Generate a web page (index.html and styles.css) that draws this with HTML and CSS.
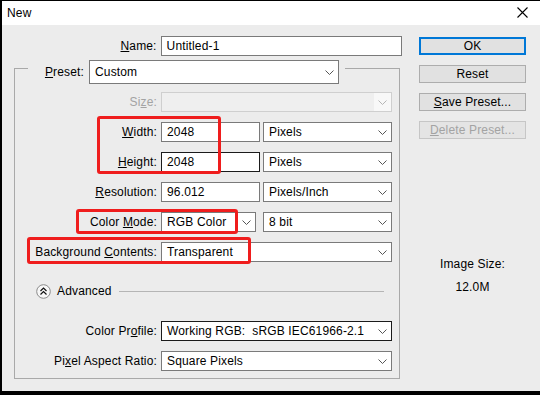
FILE: index.html
```html
<!DOCTYPE html>
<html>
<head>
<meta charset="utf-8">
<link rel="stylesheet" href="styles.css">
</head>
<body>
<div class="window">
  <div class="titlebar">
    <span class="title">New</span>
    <svg class="close" width="11" height="11" viewBox="0 0 11 11"><path d="M0.5 0.5L10.5 10.5M10.5 0.5L0.5 10.5" stroke="#000" stroke-width="1.1" fill="none"/></svg>
  </div>
  <div class="content">
    <div class="left">
      <div class="name-row">
        <span class="lbl name-lbl"><u>N</u>ame:</span>
        <div class="field input name-input">Untitled-1</div>
      </div>
      <div class="group">
        <div class="legend">
          <span class="lbl preset-lbl"><u>P</u>reset:</span>
          <div class="field select preset-select"><span class="val">Custom</span><svg class="chev" width="9" height="5" viewBox="0 0 9 5"><path d="M0.5 0.5L4.5 4.5L8.5 0.5" stroke="#555" fill="none"/></svg></div>
        </div>
        <div class="rows">
          <span class="lbl dis">Si<u>z</u>e:</span>
          <div class="field select disabled"><span class="val"></span><span class="dis-arrow"><svg class="chev" width="9" height="5" viewBox="0 0 9 5"><path d="M0.5 0.5L4.5 4.5L8.5 0.5" stroke="#b5b5b5" fill="none"/></svg></span></div>

          <span class="lbl"><u>W</u>idth:</span>
          <div class="pair">
            <div class="field input num">2048</div>
            <div class="field select unit"><span class="val">Pixels</span><svg class="chev" width="9" height="5" viewBox="0 0 9 5"><path d="M0.5 0.5L4.5 4.5L8.5 0.5" stroke="#555" fill="none"/></svg></div>
          </div>

          <span class="lbl"><u>H</u>eight:</span>
          <div class="pair">
            <div class="field input num focus">2048</div>
            <div class="field select unit"><span class="val">Pixels</span><svg class="chev" width="9" height="5" viewBox="0 0 9 5"><path d="M0.5 0.5L4.5 4.5L8.5 0.5" stroke="#555" fill="none"/></svg></div>
          </div>

          <span class="lbl"><u>R</u>esolution:</span>
          <div class="pair">
            <div class="field input num">96.012</div>
            <div class="field select unit"><span class="val">Pixels/Inch</span><svg class="chev" width="9" height="5" viewBox="0 0 9 5"><path d="M0.5 0.5L4.5 4.5L8.5 0.5" stroke="#555" fill="none"/></svg></div>
          </div>

          <span class="lbl">Color <u>M</u>ode:</span>
          <div class="pair">
            <div class="field select mode"><span class="val">RGB Color</span><svg class="chev" width="9" height="5" viewBox="0 0 9 5"><path d="M0.5 0.5L4.5 4.5L8.5 0.5" stroke="#555" fill="none"/></svg></div>
            <div class="field select unit"><span class="val">8 bit</span><svg class="chev" width="9" height="5" viewBox="0 0 9 5"><path d="M0.5 0.5L4.5 4.5L8.5 0.5" stroke="#555" fill="none"/></svg></div>
          </div>

          <span class="lbl">Background <u>C</u>ontents:</span>
          <div class="field select"><span class="val">Transparent</span><svg class="chev" width="9" height="5" viewBox="0 0 9 5"><path d="M0.5 0.5L4.5 4.5L8.5 0.5" stroke="#555" fill="none"/></svg></div>
        </div>

        <div class="advanced">
          <svg class="adv-icon" width="15" height="15" viewBox="0 0 15 15"><circle cx="7.5" cy="7.5" r="6.8" fill="#f7f7f7" stroke="#8a8a8a"/><path d="M4.5 7L7.5 4L10.5 7M4.5 10.5L7.5 7.5L10.5 10.5" stroke="#111" stroke-width="1.2" fill="none"/></svg>
          <span class="adv-text">Advanced</span>
          <span class="adv-line"></span>
        </div>

        <div class="rows rows2">
          <span class="lbl">Color Pr<u>o</u>file:</span>
          <div class="field select focus"><span class="val">Working RGB:&nbsp; sRGB IEC61966-2.1</span><svg class="chev" width="9" height="5" viewBox="0 0 9 5"><path d="M0.5 0.5L4.5 4.5L8.5 0.5" stroke="#555" fill="none"/></svg></div>

          <span class="lbl">Pi<u>x</u>el Aspect Ratio:</span>
          <div class="field select"><span class="val">Square Pixels</span><svg class="chev" width="9" height="5" viewBox="0 0 9 5"><path d="M0.5 0.5L4.5 4.5L8.5 0.5" stroke="#555" fill="none"/></svg></div>
        </div>
      </div>
    </div>
    <div class="right">
      <div class="btn default">OK</div>
      <div class="btn">Reset</div>
      <div class="btn"><u>S</u>ave Preset...</div>
      <div class="btn btn-dis"><u>D</u>elete Preset...</div>
      <div class="info">
        <div class="info-label">Image Size:</div>
        <div class="info-value">12.0M</div>
      </div>
    </div>
  </div>
  <div class="mark mark-wh"></div>
  <div class="mark mark-mode"></div>
  <div class="mark mark-bg"></div>
</div>
</body>
</html>
```

FILE: styles.css
```css
html, body {
  margin: 0;
  padding: 0;
  background: #000;
}
body {
  width: 540px;
  height: 395px;
  overflow: hidden;
  font-family: "Liberation Sans", Arial, sans-serif;
  font-size: 12px;
  letter-spacing: 0.15px;
  color: #000;
}
u { text-decoration: underline; text-underline-offset: 1px; }

.window {
  position: relative;
  margin: 1px 0 0 2px;
  width: 538px;
  height: 390px;
  background: #ececec;
}
.titlebar {
  height: 24px;
  background: #fff;
  display: flex;
  align-items: center;
  justify-content: space-between;
  padding: 0 12px 0 5px;
}
.title { line-height: 24px; font-size: 12px; }
.close { display: block; margin-top: -2px; }

.content {
  display: flex;
  align-items: flex-start;
}
.left { width: 400px; }

.lbl {
  text-align: right;
  line-height: 20px;
  white-space: nowrap;
}
.lbl.dis { color: #a3a3a3; }

.name-row {
  margin-top: 11px;
  display: flex;
  gap: 4px;
  height: 20px;
}
.name-lbl { width: 155px; }

.field {
  box-sizing: border-box;
  height: 20px;
  background: #fff;
  border: 1px solid #7a7a7a;
  line-height: 18px;
  padding-left: 5px;
  white-space: nowrap;
  overflow: hidden;
}
.name-input { width: 242px; }

.select {
  display: flex;
  align-items: center;
  justify-content: space-between;
  padding-right: 4px;
}
.chev { display: block; flex: none; }

.group {
  box-sizing: border-box;
  margin: 12px 0 0 12px;
  width: 386px;
  height: 311px;
  border: 1px solid #a9a9a9;
  padding-bottom: 7px;
}
.legend {
  margin: -9px 0 0 13px;
  width: 317px;
  height: 24px;
  background: #ececec;
  display: flex;
  align-items: center;
  gap: 5px;
}
.preset-lbl { width: 56px; }
.preset-select { width: 250px; height: 24px; }

.rows {
  margin-top: 8px;
  display: grid;
  grid-template-columns: 142px 231px;
  grid-auto-rows: 20px;
  column-gap: 4px;
  row-gap: 10px;
}
.rows2 { margin-top: 23px; }

.pair {
  display: flex;
  justify-content: space-between;
}
.num { width: 99px; }
.unit { width: 129px; }
.mode { width: 95px; }
.focus { border-color: #1b1b1b; }

.disabled {
  background: #efefef;
  border-color: #cfcfcf;
  padding-right: 0;
}
.dis-arrow {
  width: 17px;
  height: 18px;
  background: #f8f8f8;
  display: flex;
  align-items: center;
  justify-content: center;
}

.advanced {
  margin: 22px 0 0 21px;
  height: 14px;
  display: flex;
  align-items: center;
}
.adv-icon { display: block; flex: none; }
.adv-text { margin-left: 6px; line-height: 14px; }
.adv-line {
  flex: none;
  width: 265px;
  height: 1px;
  background: #b5b5b5;
  margin-left: 7px;
}

.right {
  margin: 12px 0 0 17px;
  width: 107px;
  display: flex;
  flex-direction: column;
  gap: 10px;
}
.btn {
  box-sizing: border-box;
  height: 18px;
  background: #e1e1e1;
  border: 1px solid #adadad;
  text-align: center;
  line-height: 16px;
}
.btn.default {
  border: 2px solid #0078d7;
  line-height: 14px;
}
.btn-dis {
  color: #a3a3a3;
  background: #e4e4e4;
  border-color: #c6c6c6;
}
.info {
  margin-top: 107px;
  text-align: center;
}
.info-label { line-height: 16px; }
.info-value { line-height: 16px; margin-top: 7px; }

.mark {
  position: absolute;
  box-sizing: border-box;
  border: 3px solid #ef1d1d;
  border-radius: 3px;
}
.mark-wh { left: 95px; top: 115px; width: 124px; height: 58px; }
.mark-mode { left: 74px; top: 208px; width: 162px; height: 25px; }
.mark-bg { left: 25px; top: 236px; width: 224px; height: 27px; }
```
